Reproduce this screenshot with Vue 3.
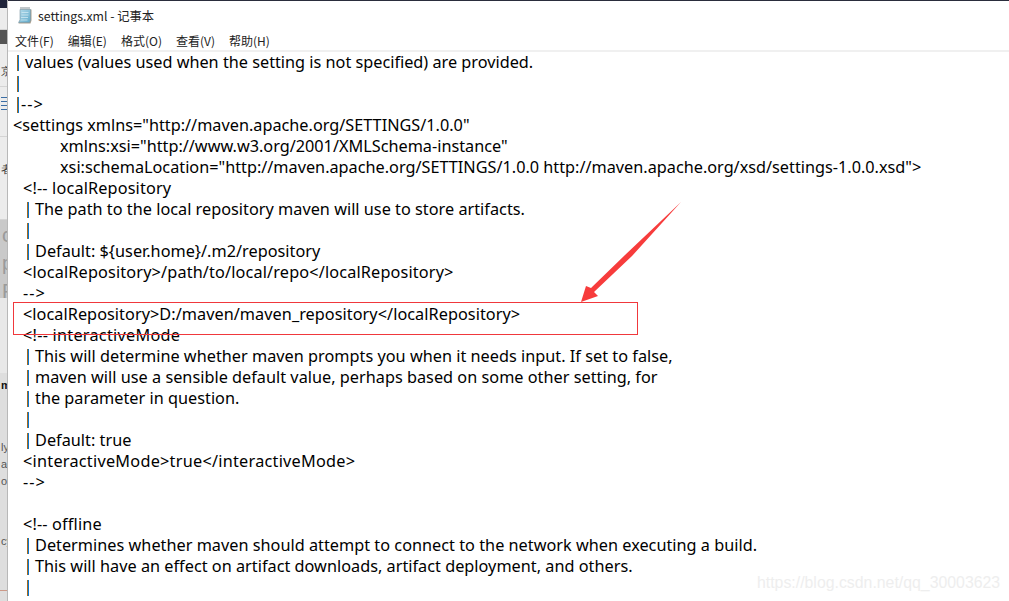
<script setup>
const lines = [
  { p: 'a', t: 'values (values used when the setting is not specified) are provided.' },
  { p: 'a', t: '' },
  { p: 'c', t: '-->', c: 'dash' },
  { t: '<settings xmlns="http://maven.apache.org/SETTINGS/1.0.0"', c: 'l0' },
  { t: 'xmlns:xsi="http://www.w3.org/2001/XMLSchema-instance"', c: 'l2' },
  { t: 'xsi:schemaLocation="http://maven.apache.org/SETTINGS/1.0.0 http://maven.apache.org/xsd/settings-1.0.0.xsd">', c: 'l2' },
  { t: '<!-- localRepository', c: 'l1' },
  { p: 'b', t: 'The path to the local repository maven will use to store artifacts.' },
  { p: 'b', t: '' },
  { p: 'b', t: 'Default: ${user.home}/.m2/repository' },
  { t: '<localRepository>/path/to/local/repo</localRepository>', c: 'l1' },
  { t: '-->', c: 'l1 dash' },
  { t: '<localRepository>D:/maven/maven_repository</localRepository>', c: 'l1 snug' },
  { t: '<!-- interactiveMode', c: 'l1 wide' },
  { p: 'b', t: 'This will determine whether maven prompts you when it needs input. If set to false,' },
  { p: 'b', t: 'maven will use a sensible default value, perhaps based on some other setting, for' },
  { p: 'b', t: 'the parameter in question.' },
  { p: 'b', t: '' },
  { p: 'b', t: 'Default: true' },
  { t: '<interactiveMode>true</interactiveMode>', c: 'l1 wide' },
  { t: '-->', c: 'l1 dash' },
  { t: '', c: 'l1' },
  { t: '<!-- offline', c: 'l1' },
  { p: 'b', t: 'Determines whether maven should attempt to connect to the network when executing a build.' },
  { p: 'b', t: 'This will have an effect on artifact downloads, artifact deployment, and others.' },
  { p: 'b', t: '' }
]
const menus = ['文件(F)', '编辑(E)', '格式(O)', '查看(V)', '帮助(H)']
</script>

<template>
  <div class="page">
    <div class="backdrop">
      <div class="seg s-dark"></div>
      <div class="seg s-light s1"></div>
      <div class="seg s-lock"></div>
      <div class="seg s-light s2"><span class="frag">京</span></div>
      <div class="seg s-light s3"><span class="bars"></span></div>
      <div class="seg s-light s4"><span class="frag">者</span></div>
      <div class="seg s-grey">
        <span class="frag big">c</span>
        <span class="frag big">p</span>
        <span class="frag big">F</span>
      </div>
      <div class="seg s-pale"></div>
      <div class="seg s-bottom">
        <span class="frag tiny bold">m</span>
        <span class="frag tiny g1">ly</span>
        <span class="frag tiny">ac</span>
        <span class="frag tiny">ots</span>
        <span class="frag tiny g2">cy</span>
      </div>
      <div class="seg s-mark"></div>
    </div>
    <div class="main">
      <div class="topline"></div>
      <div class="window">
        <div class="titlebar">
          <svg class="icon" width="16" height="17" viewBox="0 0 16 17">
            <defs>
              <linearGradient id="pad" x1="0" y1="0" x2="1" y2="1">
                <stop offset="0" stop-color="#b5dcec" />
                <stop offset="1" stop-color="#5fa9c9" />
              </linearGradient>
            </defs>
            <path d="M3 2.5h11.5v11l-1 3H1.5l1.5-3.5z" fill="#a8a090" />
            <path d="M3 2.5h10.5v10.5l-1 2.5H1.5L3 13z" fill="url(#pad)" stroke="#7d98a6" stroke-width=".6" />
            <path d="M3.5 1h10" stroke="#5b6a72" stroke-width="1.6" stroke-dasharray="1 1" />
            <path d="M4.5 5.5h7M4.5 8h7M4 10.500h7M3.500 13h7" stroke="#cfe8f3" stroke-width=".8" />
          </svg>
          <span class="title">settings.xml - 记事本</span>
        </div>
        <div class="menubar">
          <span v-for="m in menus" :key="m" class="menu">{{ m }}</span>
        </div>
        <div class="editor">
          <div v-for="(l, i) in lines" :key="i" class="line" :class="[l.c, l.p && 'p-' + l.p]"><span v-if="l.p" class="pipe">|</span>{{ l.t }}</div>
        </div>
      </div>
    </div>
    <div class="redbox"></div>
    <svg class="arrow" width="110" height="110" viewBox="0 0 110 110">
      <path d="M101 2 L52 56 L14 92 L18 96 L1 102 L6 86 L11 88 L45 55 Z" fill="#f73c3c" />
    </svg>
    <div class="watermark">https://blog.csdn.net/qq_30003623</div>
  </div>
</template>

<style scoped>
.page {
  position: relative;
  display: flex;
  width: 1009px;
  height: 601px;
  overflow: hidden;
  background: #fff;
  font-family: "Noto Sans CJK SC", sans-serif;
}
.backdrop {
  width: 8px;
  flex: none;
  display: flex;
  flex-direction: column;
  overflow: hidden;
  background: #eee;
  border-right: 1px solid #b8b8b8;
  box-sizing: border-box;
}
.seg {
  flex: none;
  position: relative;
  overflow: hidden;
  display: flex;
  flex-direction: column;
  align-items: flex-end;
}
.s-dark { height: 8px; background: #20243a; }
.s1 { height: 22px; }
.s-light { background: #ececec; border-bottom: 1px solid #d4d4d4; box-sizing: border-box; }
.s-lock { height: 14px; background: #555; }
.s2 { height: 43px; padding-top: 20px; }
.s3 { height: 50px; }
.s4 { height: 83px; padding-top: 25px; }
.s-grey { height: 78px; background: #c9c9c9; gap: 6px; padding-top: 4px; box-sizing: border-box; }
.s-pale { height: 75px; background: #e8e8e8; }
.s-bottom { height: 217px; background: #dedede; padding-top: 5px; box-sizing: border-box; }
.s-mark { height: 11px; background: #dedede; border-top: 1px solid #c98; box-sizing: border-box; }
.frag {
  font-family: "Liberation Sans", sans-serif;
  font-size: 11px;
  line-height: 14px;
  color: #333;
  white-space: pre;
  width: 8px;
  text-align: left;
  margin-right: -2px;
}
.big { font-size: 20px; line-height: 22px; color: #9a9a9a; margin-right: -3px; }
.tiny { font-size: 11px; color: #555; height: 17px; }
.bold { font-weight: 700; color: #111; margin-bottom: 45px; }
.g2 { margin-top: 43px; }
.bars {
  width: 6px;
  height: 14px;
  margin-top: 10px;
  background: repeating-linear-gradient(#3b6ea5 0 1px, transparent 1px 4px);
}
.main {
  flex: 1;
  min-width: 0;
  display: flex;
  flex-direction: column;
}
.topline { height: 1px; flex: none; background: #2a2d3c; }
.window {
  flex: 1;
  min-height: 0;
  background: #fff;
  color: #000;
}
.titlebar {
  height: 29px;
  display: flex;
  align-items: center;
  gap: 5px;
  padding-left: 9px;
}
.title { font-size: 12.3px; color: #222; }
.menubar {
  height: 20px;
  display: flex;
  align-items: center;
  gap: 14px;
  padding-left: 7px;
  border-bottom: 2px solid #f0f0f0;
}
.menu { font-size: 12px; color: #222; }
.line {
  height: 21px;
  line-height: 21px;
  font-family: "Noto Sans", "Noto Sans CJK SC", sans-serif;
  font-size: 16.25px;
  white-space: pre;
}
.p-a { padding-left: 9px; }
.p-b { padding-left: 19px; letter-spacing: 0.015px; }
.p-c { padding-left: 9px; }
.l0 { padding-left: 5px; }
.l1 { padding-left: 15px; letter-spacing: 0.15px; }
.l2 { padding-left: 52px; }
.snug { letter-spacing: 0.05px; }
.wide { letter-spacing: 0.25px; }
.dash { letter-spacing: 1px; }
.pipe {
  display: inline-block;
  width: 8px;
  height: 16px;
  margin-top: 3px;
  vertical-align: top;
  font-size: 10px;
  line-height: 16px;
  letter-spacing: 0;
  color: transparent;
  overflow: hidden;
  background:
    linear-gradient(90deg, #a66a1e 0 1px, #0a76cf 1px 2px, transparent 2px) no-repeat;
}
.p-c .pipe { width: 4px; font-size: 6px; }
.redbox {
  position: absolute;
  left: 13px;
  top: 302px;
  width: 623px;
  height: 31px;
  border: 1px solid #f0383c;
}
.arrow {
  position: absolute;
  left: 580px;
  top: 200px;
}
.watermark {
  position: absolute;
  left: 757px;
  top: 574px;
  font-family: "Liberation Sans", sans-serif;
  font-size: 15.85px;
  color: #eeeeee;
}
</style>
